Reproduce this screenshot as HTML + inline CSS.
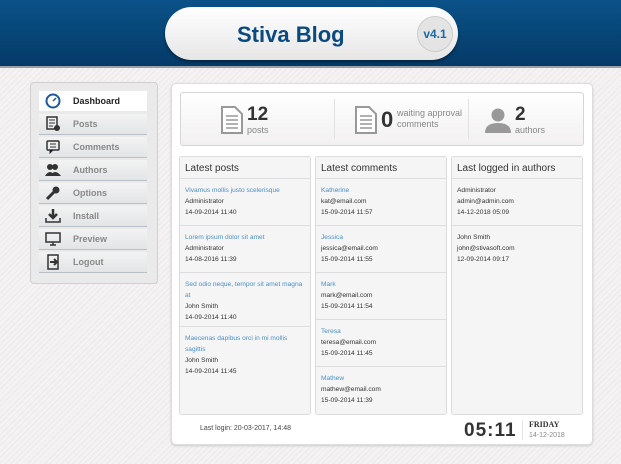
<!DOCTYPE html><html><head><style>
body{margin:0;width:621px;height:464px;overflow:hidden;font-family:"Liberation Sans",sans-serif;background:#f2f0f0 repeating-linear-gradient(135deg,#f4f2f2 0 3px,#ebe9e9 3px 4px);position:relative}
.hd{position:absolute;left:0;top:0;width:621px;height:66px;background:linear-gradient(#0b5288,#043a68);border-bottom:2px solid #9aa0a6}
.pill{position:absolute;left:165px;top:7px;width:293px;height:53px;border-radius:27px;background:linear-gradient(#fff,#e6e6e6);box-shadow:0 2px 3px rgba(0,0,0,.4)}
.pill b{position:absolute;left:72px;top:15px;font-size:22px;color:#0b4a80}
.ver{position:absolute;left:252px;top:9px;width:34px;height:34px;border-radius:50%;background:#e4e4e4;border:1px solid #ccc;color:#1a6aa8;font-weight:bold;font-size:12px;line-height:34px;text-align:center}
.side{position:absolute;left:30px;top:82px;width:126px;height:200px;background:#eaeaea;border:1px solid #d0d0d0;border-radius:4px}
.mi{position:absolute;left:8px;width:108px;height:20px;background:linear-gradient(#f3f3f3,#e2e4e6);border-bottom:1px solid #b9c0c6;font-size:9px;font-weight:bold;color:#888;line-height:20px}
.mi span{position:absolute;left:34px}
.mi svg{position:absolute;left:6px;top:2px}
.main{position:absolute;left:171px;top:83px;width:420px;height:360px;background:#fff;border:1px solid #ddd;border-radius:5px;box-shadow:0 1px 2px #ccc}
.stats{position:absolute;left:180px;top:92px;width:402px;height:52px;background:linear-gradient(#fff,#f2f0f0);border:1px solid #d6d6d6;border-radius:3px}
.col{position:absolute;top:156px;width:130px;height:257px;background:#f5f5f5;border:1px solid #dcdcdc;border-radius:3px;font-size:6.6px;color:#333}
.col h3{margin:0;height:21px;border-bottom:1px solid #ddd;font-weight:normal;font-size:10px;line-height:23px;padding-left:5px;color:#333}
.e{border-bottom:1px solid #ddd;padding:6px 5px 0;line-height:11px}
.e a{color:#4a90c8}
</style></head><body>
<div class="hd"><div class="pill"><b>Stiva Blog</b><div class="ver">v4.1</div></div></div>
<div class="side">
<div class="mi" style="top:8px;background:#fff;border:none;color:#222"><svg width="16" height="16"><circle cx="8" cy="8" r="6.5" fill="none" stroke="#1a5a9a" stroke-width="2"/><path d="M8 8l3-3" stroke="#1a5a9a" stroke-width="1.5"/></svg><span>Dashboard</span></div>
<div class="mi" style="top:31px"><svg width="16" height="16"><rect x="2" y="1" width="10" height="12" fill="none" stroke="#333" stroke-width="1.5"/><path d="M4 4h6M4 7h6M4 10h4" stroke="#333"/><circle cx="12" cy="12" r="3" fill="#333"/></svg><span>Posts</span></div>
<div class="mi" style="top:54px"><svg width="16" height="16"><rect x="2" y="2" width="12" height="9" rx="1" fill="none" stroke="#333" stroke-width="1.5"/><path d="M5 5h6M5 8h6M5 11v3l3-3" stroke="#333"/></svg><span>Comments</span></div>
<div class="mi" style="top:77px"><svg width="16" height="16"><circle cx="5" cy="5" r="3" fill="#333"/><circle cx="10" cy="5" r="3" fill="#333"/><path d="M0 14q5-8 10 0zM5 14q5-8 11 0z" fill="#333"/></svg><span>Authors</span></div>
<div class="mi" style="top:100px"><svg width="16" height="16"><path d="M2 14l7-7" stroke="#333" stroke-width="3"/><circle cx="11" cy="5" r="3.5" fill="#333"/></svg><span>Options</span></div>
<div class="mi" style="top:123px"><svg width="16" height="16"><path d="M8 1v8M4 6l4 4 4-4" stroke="#333" stroke-width="2.5" fill="none"/><path d="M1 10v4h14v-4" stroke="#333" stroke-width="1.5" fill="none"/></svg><span>Install</span></div>
<div class="mi" style="top:146px"><svg width="16" height="16"><rect x="1" y="2" width="14" height="9" fill="none" stroke="#333" stroke-width="1.5"/><path d="M5 14h6M8 11v3" stroke="#333" stroke-width="1.5"/></svg><span>Preview</span></div>
<div class="mi" style="top:169px"><svg width="16" height="16"><rect x="3" y="1" width="10" height="14" fill="none" stroke="#333" stroke-width="1.5"/><path d="M5 8h6M9 5l3 3-3 3" stroke="#333" stroke-width="2" fill="none"/></svg><span>Logout</span></div>
</div>
<div class="main"></div>
<div class="stats">
<div style="position:absolute;left:153px;top:6px;width:1px;height:40px;background:#e2e2e2"></div>
<div style="position:absolute;left:287px;top:6px;width:1px;height:40px;background:#e2e2e2"></div>
<svg style="position:absolute;left:40px;top:13px" width="22" height="28"><path d="M1 1h13l7 7v19H1z" fill="#fff" stroke="#999" stroke-width="2"/><path d="M5 10h12M5 14h12M5 18h12M5 22h12" stroke="#999" stroke-width="1.5"/></svg>
<div style="position:absolute;left:66px;top:11px;font-size:19px;font-weight:bold;color:#333">12</div>
<div style="position:absolute;left:66px;top:32px;font-size:9px;color:#888">posts</div>
<svg style="position:absolute;left:174px;top:13px" width="22" height="28"><path d="M1 1h13l7 7v19H1z" fill="#fff" stroke="#999" stroke-width="2"/><path d="M5 10h12M5 14h12M5 18h12M5 22h12" stroke="#999" stroke-width="1.5"/></svg>
<div style="position:absolute;left:200px;top:14px;font-size:22px;font-weight:bold;color:#333">0</div>
<div style="position:absolute;left:216px;top:15px;font-size:9px;color:#888;line-height:11px">waiting approval<br>comments</div>
<svg style="position:absolute;left:304px;top:14px" width="26" height="26"><circle cx="13" cy="8" r="6.5" fill="#999"/><path d="M0 26q0-10 13-10t13 10z" fill="#999"/></svg>
<div style="position:absolute;left:334px;top:11px;font-size:19px;font-weight:bold;color:#333">2</div>
<div style="position:absolute;left:334px;top:32px;font-size:9px;color:#888">authors</div>
</div>
<div class="col" style="left:179px"><h3>Latest posts</h3>
<div class="e" style="height:40px"><a>Vivamus mollis justo scelerisque</a><br>Administrator<br>14-09-2014 11:40</div>
<div class="e" style="height:40px"><a>Lorem ipsum dolor sit amet</a><br>Administrator<br>14-08-2016 11:39</div>
<div class="e" style="height:47px"><a>Sed odio neque, tempor sit amet magna at</a><br>John Smith<br>14-09-2014 11:40</div>
<div class="e" style="border:none"><a>Maecenas dapibus orci in mi mollis sagittis</a><br>John Smith<br>14-09-2014 11:45</div>
</div>
<div class="col" style="left:315px"><h3>Latest comments</h3>
<div class="e" style="height:40px"><a>Katherine</a><br>kat@email.com<br>15-09-2014 11:57</div>
<div class="e" style="height:40px"><a>Jessica</a><br>jessica@email.com<br>15-09-2014 11:55</div>
<div class="e" style="height:40px"><a>Mark</a><br>mark@email.com<br>15-09-2014 11:54</div>
<div class="e" style="height:40px"><a>Teresa</a><br>teresa@email.com<br>15-09-2014 11:45</div>
<div class="e" style="border:none"><a>Mathew</a><br>mathew@email.com<br>15-09-2014 11:39</div>
</div>
<div class="col" style="left:451px"><h3>Last logged in authors</h3>
<div class="e" style="height:40px">Administrator<br>admin@admin.com<br>14-12-2018 05:09</div>
<div class="e" style="border:none">John Smith<br>john@stivasoft.com<br>12-09-2014 09:17</div>
</div>
<div style="position:absolute;left:200px;top:425px;font-size:7px;color:#444">Last login: 20-03-2017, 14:48</div>
<div style="position:absolute;left:464px;top:420px;font-size:19px;font-weight:bold;color:#333;letter-spacing:1px">05:11</div>
<div style="position:absolute;left:522px;top:420px;width:1px;height:20px;background:#e4e4e4"></div>
<div style="position:absolute;left:529px;top:420px;font-size:8px;font-weight:bold;color:#333;font-family:'Liberation Serif',serif">FRIDAY</div>
<div style="position:absolute;left:529px;top:432px;font-size:7px;color:#888">14-12-2018</div>
</body></html>
